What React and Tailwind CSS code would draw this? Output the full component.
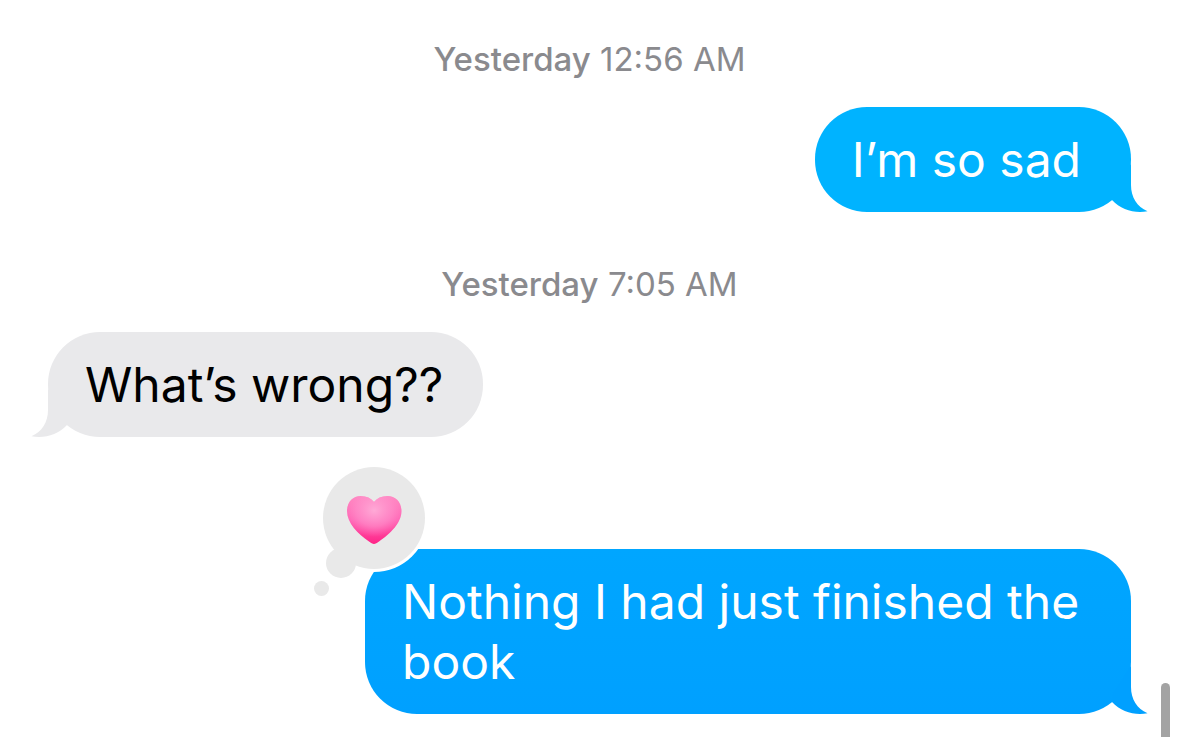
import clsx from "clsx";

const HEART =
  "M61 81C59.500 81 58 80 56 78.500C45 71 34 60 34 48C34 39 40 33 47.500 33C53.500 33 58 35 61 39C64 35 68.500 33 74.500 33C82.500 33 88.500 39 88.500 48C88.500 60 77 71 66 78.500C64 80 62.500 81 61 81Z";

function Timestamp({ day, time }) {
  return (
    <p className="text-center text-[33px] leading-10 text-[#8a8a8e]">
      <span className="font-medium">{day}</span> {time}
    </p>
  );
}

function Tail({ className }) {
  return (
    <svg
      viewBox="0 0 48 52"
      className={clsx("absolute bottom-0 h-[52px] w-12", className)}
      fill="currentColor"
      aria-hidden="true"
    >
      <path d="M31 4V25C31 37 37 47 47.500 51.200C35 53.500 21 50 12 40V34L28 8Z" />
    </svg>
  );
}

function HeartReaction() {
  return (
    <svg
      viewBox="0 0 116 136"
      className="absolute -top-[86px] -left-[52px] h-[136px] w-[116px]"
      role="img"
      aria-label="Loved"
    >
      <defs>
        <linearGradient id="heart-base" x1="0" y1="0" x2="0" y2="1">
          <stop offset="0" stopColor="#ff86c0" />
          <stop offset="0.500" stopColor="#ff62b4" />
          <stop offset="1" stopColor="#ff2487" />
        </linearGradient>
        <radialGradient id="heart-shine" cx="0.500" cy="0.300" r="0.550">
          <stop offset="0" stopColor="#ffb0da" stopOpacity="0.900" />
          <stop offset="0.600" stopColor="#ff94cd" stopOpacity="0.600" />
          <stop offset="1" stopColor="#ff8bc7" stopOpacity="0" />
        </radialGradient>
      </defs>
      <circle cx="61" cy="55" r="54" fill="#fff" />
      <g fill="#e9e9e9">
        <circle cx="61" cy="55" r="51" />
        <circle cx="28" cy="100" r="15" />
        <circle cx="8.500" cy="125.500" r="7.500" />
      </g>
      <path d={HEART} fill="url(#heart-base)" />
      <path d={HEART} fill="url(#heart-shine)" />
    </svg>
  );
}

function Bubble({ sent = false, className, tailClassName, reaction, children }) {
  return (
    <div
      className={clsx(
        "relative w-fit max-w-[766px] rounded-[52px] pt-[23px] pb-[22px] pl-[37px] text-5xl leading-[60px]",
        sent ? "self-end pr-[50px] text-white" : "self-start bg-[#e9e9eb] pr-10 text-black",
        className
      )}
    >
      <Tail
        className={clsx(sent ? "-right-[17px]" : "-left-[17px] -scale-x-100", tailClassName)}
      />
      <p>{children}</p>
      {reaction}
    </div>
  );
}

export default function App() {
  return (
    <main className="relative flex min-h-screen flex-col overflow-hidden bg-white px-12 pt-[39px] pb-[23px] font-['Inter',sans-serif]">
      <Timestamp day="Yesterday" time="12:56 AM" />
      <Bubble sent className="mt-7 bg-[#00b3ff]" tailClassName="text-[#00b3ff]">
        I’m so sad
      </Bubble>

      <div className="mt-[52px]">
        <Timestamp day="Yesterday" time="7:05 AM" />
      </div>
      <Bubble className="mt-7" tailClassName="text-[#e9e9eb]">
        What’s wrong??
      </Bubble>
      <Bubble
        sent
        className="mt-28 bg-linear-to-b from-[#00a6ff] to-[#00a0ff]"
        tailClassName="text-[#00a0ff]"
        reaction={<HeartReaction />}
      >
        Nothing I had just finished the book
      </Bubble>

      <div className="absolute right-[9px] bottom-0 h-[54px] w-[9px] rounded-t-full bg-[#a3a3a3]" />
    </main>
  );
}
